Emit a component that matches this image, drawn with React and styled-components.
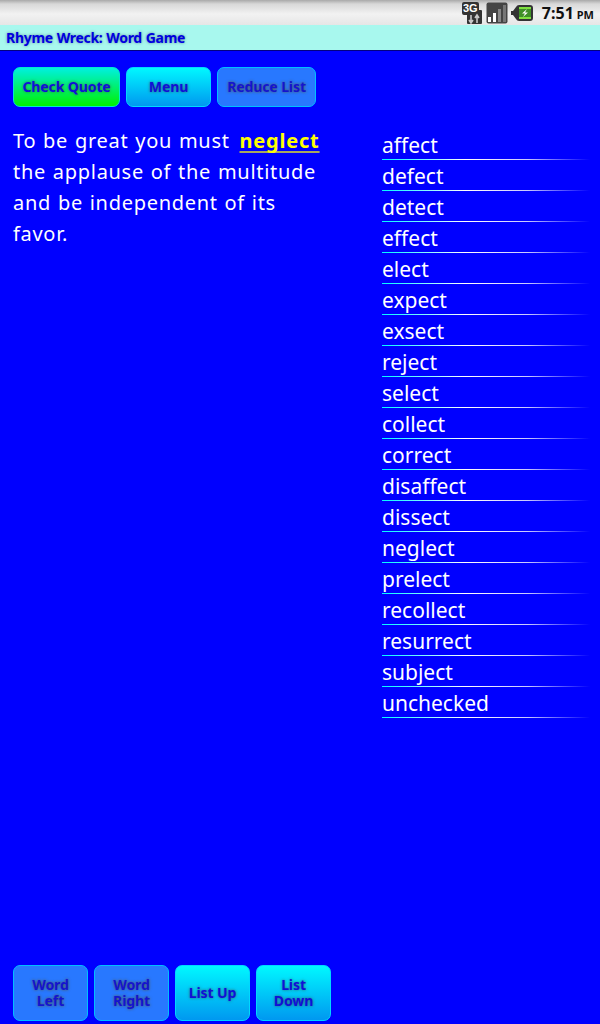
import React from 'react';
import styled, { createGlobalStyle, css } from 'styled-components';

const GlobalStyle = createGlobalStyle`
  html, body {
    margin: 0;
    padding: 0;
    background: #0000ff;
  }
  * {
    box-sizing: border-box;
  }
`;

const Page = styled.div`
  width: 600px;
  height: 1024px;
  display: flex;
  flex-direction: column;
  overflow: hidden;
  background: #0000ff;
  font-family: 'Noto Sans', 'Open Sans', sans-serif;
`;

const StatusBar = styled.div`
  height: 25px;
  display: flex;
  align-items: center;
  justify-content: flex-end;
  gap: 3px;
  padding-right: 6px;
  background: linear-gradient(#a9a9a9 0, #d8d8d8 4px, #f2f2f2 14px, #e6e6e6 25px);
`;

const Clock = styled.div`
  margin-left: 6px;
  display: flex;
  align-items: baseline;
  gap: 3px;
  font-weight: 700;
  font-size: 16px;
  color: #111;
  small {
    font-size: 11px;
  }
`;

const TitleBar = styled.div`
  height: 26px;
  padding: 0 6px;
  display: flex;
  align-items: center;
  background: #a8f8ee;
  border-bottom: 1px solid #000080;
  color: #0000e0;
  font-weight: 700;
  font-size: 14px;
  letter-spacing: -0.3px;
  word-spacing: 0.5px;
  text-shadow: 0 0 3px rgba(40, 60, 90, 0.6);
`;

const Toolbar = styled.div`
  display: flex;
  gap: 6px;
  padding: 16px 13px 0;
`;

const buttonKinds = {
  go: css`
    background: linear-gradient(#00f0e0, #00f000);
    border-color: #00e8d0;
  `,
  on: css`
    background: linear-gradient(#00f8ff, #0098f0);
    border-color: #00d8ff;
  `,
  off: css`
    background: #2878ff;
    border-color: #00c0ff;
    color: #1414d0;
    text-shadow: 0 0 3px rgba(90, 90, 50, 0.95);
  `
};

const Button = styled.div`
  width: ${(p) => p.$width}px;
  height: ${(p) => p.$height}px;
  padding: 0 14px;
  display: flex;
  align-items: center;
  justify-content: center;
  text-align: center;
  border: 1px solid;
  border-radius: 7px;
  color: #1010d8;
  font-weight: 700;
  font-size: 14px;
  line-height: 16px;
  letter-spacing: -0.1px;
  text-shadow: 0 0 3px rgba(70, 70, 50, 0.75);
  ${(p) => buttonKinds[p.$kind]}
`;

const ToolbarLabel = styled.span`
  margin: 0 -14px;
  white-space: nowrap;
`;

const Content = styled.div`
  flex: 1;
  display: flex;
  padding-left: 13px;
`;

const Quote = styled.p`
  width: 312px;
  margin: 18px 0 0;
  color: #fff;
  font-size: 20px;
  line-height: 31px;
  letter-spacing: 0.7px;
  word-spacing: 1px;
`;

const Highlight = styled.span`
  margin-left: 3px;
  color: #ffff00;
  font-weight: 700;
  letter-spacing: 0.8px;
  text-decoration: underline 2px #a8a860;
  text-underline-offset: 3px;
  text-decoration-skip-ink: none;
`;

const WordList = styled.div`
  width: 208px;
  margin: 22px 0 0 57px;
  display: flex;
  flex-direction: column;
`;

const Word = styled.div`
  height: 31px;
  position: relative;
  color: #fff;
  font-size: 21px;
  line-height: 33px;
  white-space: nowrap;
  &::after {
    content: '';
    position: absolute;
    left: 0;
    right: 0;
    bottom: 0;
    height: 1px;
    background: linear-gradient(90deg, #00f8ff 0, #ffffff 40%, #c8c8ff 70%, #0000ff 100%);
  }
`;

const BottomBar = styled.div`
  display: flex;
  gap: 6px;
  padding: 0 13px 3px;
`;

function NetworkIcon() {
  return (
    <svg width="22" height="22" viewBox="0 0 22 22">
      <path d="M1 2a2 2 0 0 1 2-2h13a2 2 0 0 1 2 2v6h2a1 1 0 0 1 1 1v12a1 1 0 0 1-1 1H7a1 1 0 0 1-1-1v-8H3a2 2 0 0 1-2-2z" fill="#333" />
      <text x="2" y="10" fontSize="11" fontWeight="700" fill="#fff" fontFamily="Liberation Sans">3G</text>
      <path d="M10 13v7M8 18l2 3 2-3M16 21v-7M14 16l2-3 2 3" stroke="#c8c8c8" strokeWidth="1.6" fill="none" />
    </svg>
  );
}

function SignalIcon() {
  return (
    <svg width="22" height="22" viewBox="0 0 22 22">
      <rect x="0.5" y="0.5" width="21" height="21" rx="2" fill="#444" />
      <rect x="2" y="15" width="3" height="5" fill="#fff" />
      <rect x="7" y="11" width="3" height="9" fill="#fff" />
      <rect x="12" y="7" width="3" height="13" fill="#888" />
      <rect x="17" y="3" width="3" height="17" fill="#777" />
    </svg>
  );
}

function BatteryIcon() {
  return (
    <svg width="22" height="16" viewBox="0 0 22 16">
      <path d="M2 6l3-4a4 4 0 0 1 3-2h11a3 3 0 0 1 3 3v10a3 3 0 0 1-3 3H8a4 4 0 0 1-3-2l-3-4H0V6z" fill="#333" />
      <rect x="8" y="2" width="12" height="12" rx="1" fill="#3f8f28" />
      <rect x="8" y="2" width="12" height="2" fill="#7fe040" />
      <rect x="8" y="12" width="12" height="2" fill="#7fe040" />
      <path d="M16 4l-5 4.500h3L12 12l5-4.500h-3z" fill="#fff" />
    </svg>
  );
}

const topButtons = [
  { label: 'Check Quote', kind: 'go', width: 107 },
  { label: 'Menu', kind: 'on', width: 85 },
  { label: 'Reduce List', kind: 'off', width: 99 }
];

const bottomButtons = [
  { label: 'Word Left', kind: 'off' },
  { label: 'Word Right', kind: 'off' },
  { label: 'List\u00a0Up', kind: 'on' },
  { label: 'List Down', kind: 'on' }
];

const words = [
  'affect', 'defect', 'detect', 'effect', 'elect', 'expect', 'exsect', 'reject', 'select', 'collect',
  'correct', 'disaffect', 'dissect', 'neglect', 'prelect', 'recollect', 'resurrect', 'subject', 'unchecked'
];

export default function App() {
  return (
    <Page>
      <GlobalStyle />
      <StatusBar>
        <NetworkIcon />
        <SignalIcon />
        <BatteryIcon />
        <Clock>7:51 <small>PM</small></Clock>
      </StatusBar>
      <TitleBar>Rhyme Wreck: Word Game</TitleBar>
      <Toolbar>
        {topButtons.map((b) => (
          <Button key={b.label} $kind={b.kind} $width={b.width} $height={40}>
            <ToolbarLabel>{b.label}</ToolbarLabel>
          </Button>
        ))}
      </Toolbar>
      <Content>
        <Quote>
          To be great you must <Highlight>neglect</Highlight> the applause of the multitude and be independent of its favor.
        </Quote>
        <WordList>
          {words.map((w) => (
            <Word key={w}>{w}</Word>
          ))}
        </WordList>
      </Content>
      <BottomBar>
        {bottomButtons.map((b) => (
          <Button key={b.label} $kind={b.kind} $width={75} $height={56}>{b.label}</Button>
        ))}
      </BottomBar>
    </Page>
  );
}
